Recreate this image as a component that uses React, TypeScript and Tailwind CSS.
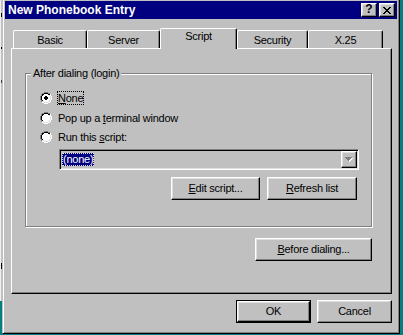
import React from "react";

const RADIO = [
  "    DDDD    ",
  "  DDKKKKDD  ",
  " DKKwwwwKKW ",
  " DKwwwwwwLW ",
  "DKwwwwwwwwLW",
  "DKwwwwwwwwLW",
  "DKwwwwwwwwLW",
  "DKwwwwwwwwLW",
  " DKwwwwwwLW ",
  " DLLwwwwLLW ",
  "  WWLLLLWW  ",
  "    WWWW    ",
];
const DOT = [" KK ", "KKKK", "KKKK", " KK "];
const COL: Record<string, string> = { D: "#808080", K: "#000000", W: "#ffffff", L: "#dfdfdf", w: "#ffffff" };

function Radio({ checked }: { checked?: boolean }) {
  const rects: React.ReactNode[] = [];
  RADIO.forEach((row, y) =>
    row.split("").forEach((c, x) => {
      if (c !== " ") rects.push(<rect key={`r${x}-${y}`} x={x} y={y} width={1} height={1} fill={COL[c]} />);
    })
  );
  if (checked)
    DOT.forEach((row, y) =>
      row.split("").forEach((c, x) => {
        if (c !== " ") rects.push(<rect key={`d${x}-${y}`} x={x + 4} y={y + 4} width={1} height={1} fill="#000" />);
      })
    );
  return (
    <svg width={12} height={12} viewBox="0 0 12 12" shapeRendering="crispEdges" className="shrink-0">
      {rects}
    </svg>
  );
}

const raised =
  "bg-[#c0c0c0] border border-t-white border-l-white border-r-black border-b-black shadow-[inset_-1px_-1px_0_#808080,inset_1px_1px_0_#dfdfdf]";

function Btn({ className, children }: { className: string; children: React.ReactNode }) {
  return <div className={`flex items-center justify-center h-[23px] ${raised} ${className}`}>{children}</div>;
}

function Tab({ label, selected, className }: { label: string; selected?: boolean; className: string }) {
  if (selected)
    return (
      <div
        className={`relative z-10 h-[21px] mb-[-1px] bg-[#c0c0c0] border-l border-t border-r border-l-white border-t-white border-r-black rounded-t-[2px] shadow-[inset_-1px_0_0_#808080] flex justify-center pt-[1px] ${className}`}
      >
        <span className="leading-[13px]">{label}</span>
      </div>
    );
  return (
    <div
      className={`h-[18px] bg-[#c0c0c0] border-l border-t border-r border-l-white border-t-white border-r-black rounded-t-[2px] shadow-[inset_-1px_0_0_#808080] flex justify-center pt-[3px] ${className}`}
    >
      <span className="leading-[13px]">{label}</span>
    </div>
  );
}

export default function App() {
  return (
    <div className="w-[403px] h-[335px] bg-[#008080] overflow-hidden flex items-start font-['Liberation_Sans',Arial,sans-serif] text-[11px] tracking-[-0.25px] text-black select-none">
      {/* window behind */}
      <div className="w-[2px] h-[301px] bg-[#c0c0c0] border-l border-l-[#efefef] flex flex-col">
        <div className="h-[13px]" />
        <div className="h-[4px] bg-black" />
        <div className="h-[30px]" />
        <div className="h-[2px] bg-black" />
        <div className="h-[31px]" />
        <div className="h-[3px] bg-[#404040]" />
        <div className="h-[180px]" />
        <div className="h-[6px] bg-black" />
      </div>

      {/* dialog */}
      <div className="w-[398px] h-[336px] mt-[-2px] bg-[#c0c0c0] border border-t-[#c0c0c0] border-l-[#c0c0c0] border-r-black border-b-black shadow-[inset_1px_1px_0_#fff,inset_-1px_-1px_0_#808080] p-[2px] flex flex-col">
        {/* title bar */}
        <div className="h-[18px] bg-[#000080] flex items-center pl-[3px]">
          <span className="text-white font-bold text-[12px] tracking-[0px] leading-[14px]">New Phonebook Entry</span>
          <div className="ml-auto mr-[2px] flex gap-[2px]">
            <div className={`w-[16px] h-[14px] ${raised} flex items-center justify-center`}>
              <span className="font-bold text-[12px] leading-[11px] tracking-[0px] mt-[-1px]">?</span>
            </div>
            <div className={`w-[16px] h-[14px] ${raised} flex items-center justify-center`}>
              <svg width={8} height={7} viewBox="0 0 8 7" shapeRendering="crispEdges">
                <path
                  fill="#000"
                  d="M0 0h2v1H0zM6 0h2v1H6zM1 1h2v1H1zM5 1h2v1H5zM2 2h4v1H2zM3 3h2v1H3zM2 4h4v1H2zM1 5h2v1H1zM5 5h2v1H5zM0 6h2v1H0zM6 6h2v1H6z"
                />
              </svg>
            </div>
          </div>
        </div>

        <div className="pl-[6px] flex flex-col">
          {/* tabs */}
          <div className="mt-[9px] h-[20px] flex items-end pl-[2px]">
            <Tab label="Basic" className="w-[74px]" />
            <Tab label="Server" className="w-[73px]" />
            <Tab label="Script" selected className="w-[77px]" />
            <Tab label="Security" className="w-[71px]" />
            <Tab label="X.25" className="w-[75px]" />
          </div>

          {/* panel */}
          <div className="w-[381px] h-[246px] border border-t-white border-l-white border-r-black border-b-black shadow-[inset_-1px_-1px_0_#808080] flex flex-col pl-[13px] pt-[24px]">
            {/* group box */}
            <div className="relative w-[347px] h-[154px] shrink-0 border border-[#808080] shadow-[inset_1px_1px_0_#fff,1px_1px_0_#fff] flex flex-col">
              <span className="absolute left-[5px] top-[-7px] px-[2px] bg-[#c0c0c0] leading-[13px]">After dialing (login)</span>

              <div className="mt-[17px] ml-[14px] h-[13px] flex items-center">
                <Radio checked />
                <span className="ml-[5px] border border-dotted border-black leading-[12px] px-[0px]">
                  <u>N</u>one
                </span>
              </div>
              <div className="mt-[7px] ml-[14px] h-[13px] flex items-center">
                <Radio />
                <span className="ml-[5px] border border-transparent leading-[12px]">
                  Pop up a <u>t</u>erminal window
                </span>
              </div>
              <div className="mt-[6px] ml-[14px] h-[13px] flex items-center">
                <Radio />
                <span className="ml-[5px] border border-transparent leading-[12px]">
                  Run this <u>s</u>cript:
                </span>
              </div>

              {/* combo */}
              <div className="mt-[6px] ml-[33px] w-[300px] h-[21px] border border-t-[#808080] border-l-[#808080] border-r-white border-b-white shadow-[inset_1px_1px_0_#000,inset_-1px_-1px_0_#dfdfdf] p-[1px] flex">
                <div className="flex-1 flex items-center pl-[1px]">
                  <span className="bg-[#000080] text-white border border-dotted border-[#e0e0e0] leading-[11px] px-[0px]">(none)</span>
                </div>
                <div className={`w-[16px] h-[17px] ${raised} flex items-center justify-center`}>
                  <svg width={8} height={5} viewBox="0 0 8 5" shapeRendering="crispEdges">
                    <path fill="#fff" d="M1 1h7v1H1zM2 2h5v1H2zM3 3h3v1H3zM4 4h1v1H4z" />
                    <path fill="#808080" d="M0 0h7v1H0zM1 1h5v1H1zM2 2h3v1H2zM3 3h1v1H3z" />
                  </svg>
                </div>
              </div>

              <div className="mt-[7px] ml-[145px] flex gap-[7px]">
                <Btn className="w-[89px]">
                  <span>
                    <u>E</u>dit script...
                  </span>
                </Btn>
                <Btn className="w-[90px]">
                  <span>
                    <u>R</u>efresh list
                  </span>
                </Btn>
              </div>
            </div>

            <div className="mt-[11px] ml-[230px]">
              <Btn className="w-[117px]">
                <span>
                  <u>B</u>efore dialing...
                </span>
              </Btn>
            </div>
          </div>

          {/* bottom buttons */}
          <div className="mt-[6px] w-[381px] flex justify-end gap-[6px]">
            <div className="w-[75px] h-[23px] border border-black">
              <div className={`w-full h-full flex items-center justify-center ${raised}`}>OK</div>
            </div>
            <Btn className="w-[75px]">Cancel</Btn>
          </div>
        </div>
      </div>
    </div>
  );
}
